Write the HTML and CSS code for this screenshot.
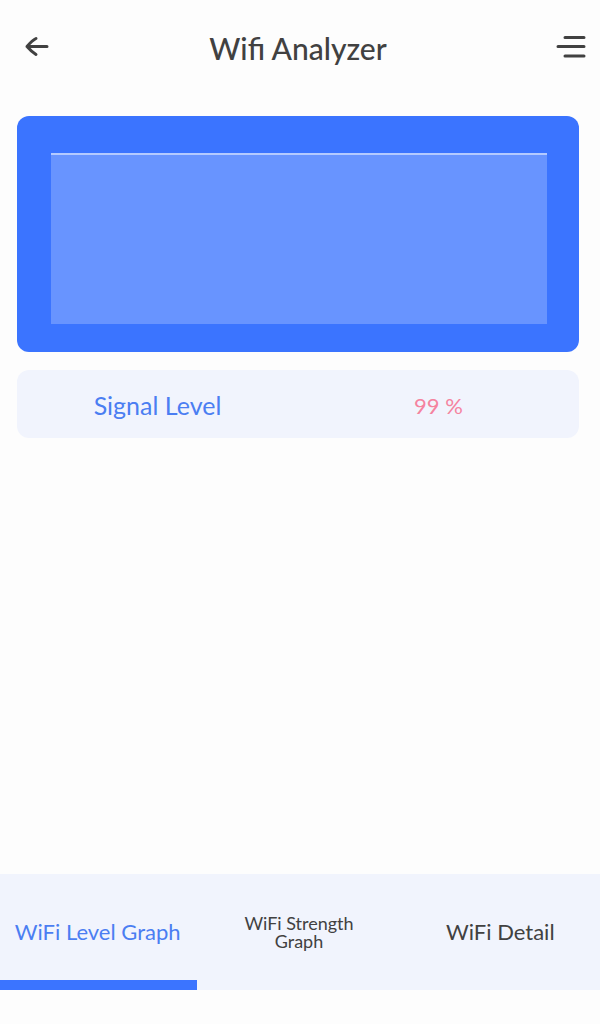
FILE: index.html
```html
<!DOCTYPE html>
<html lang="en">
<head>
  <meta charset="UTF-8">
  <meta name="viewport" content="width=device-width, initial-scale=1">
  <title>Wifi Analyzer</title>
  <link rel="stylesheet" href="styles.css">
</head>
<body>
  <header class="topbar">
    <button class="icon-btn" type="button" aria-label="Back">
      <svg width="26" height="24" viewBox="0 0 26 24">
        <path d="M23 11.5H3M12 3.5C9 5 6 8 3 11.5C6 15 9 17.5 12 19.5" />
      </svg>
    </button>
    <h1>Wifi Analyzer</h1>
    <button class="icon-btn menu" type="button" aria-label="Menu">
      <svg width="32" height="24" viewBox="0 0 32 24">
        <path d="M11 2.5H30M4 11.5H30M11 21H30" />
      </svg>
    </button>
  </header>

  <main>
    <section class="chart-card" aria-label="Signal chart">
      <div class="chart"></div>
    </section>
    <section class="signal">
      <span class="signal-label">Signal Level</span>
      <span class="signal-value">99 %</span>
    </section>
  </main>

  <nav class="tabs">
    <button class="tab active" type="button">WiFi Level Graph</button>
    <button class="tab small" type="button">WiFi Strength<br>Graph</button>
    <button class="tab" type="button">WiFi Detail</button>
  </nav>
</body>
</html>
```
FILE: styles.css
```css
* { box-sizing: border-box; }

body {
  margin: 0;
  min-height: 100vh;
  padding-bottom: 34px;
  display: flex;
  flex-direction: column;
  background: #fdfdfd;
  color: #414141;
  font-family: Lato, sans-serif;
}

button {
  border: 0;
  padding: 0;
  background: none;
  color: inherit;
  font: inherit;
  cursor: pointer;
}

/* top bar */
.topbar {
  display: grid;
  grid-template-columns: 1fr auto 1fr;
  align-items: center;
  height: 94px;
  padding: 0 14px 0 24px;
}
.topbar h1 {
  margin: 0;
  padding: 2px 14px 0 0;
  font-size: 30px;
  line-height: 36px;
  font-weight: 500;
}
.icon-btn { display: flex; justify-self: start; }
.icon-btn.menu { justify-self: end; }
.icon-btn svg {
  fill: none;
  stroke: #414141;
  stroke-width: 3;
  stroke-linecap: round;
  stroke-linejoin: round;
}

main {
  flex: 1;
  padding: 22px 21px 22px 17px;
}

/* chart */
.chart-card {
  padding: 37px 32px 28px 34px;
  border-radius: 12px;
  background: #3b74ff;
}
.chart {
  height: 171px;
  border-top: 2px solid #b4caff;
  background: #6894ff;
}

.signal {
  display: grid;
  grid-template-columns: 1fr 1fr;
  align-items: center;
  height: 68px;
  margin-top: 18px;
  padding-top: 2px;
  border-radius: 12px;
  background: #f1f4fd;
  text-align: center;
}
.signal-label { font-size: 25px; color: #4b7ef2; }
.signal-value { font-size: 22px; color: #f5839f; }

/* bottom tabs */
.tabs {
  display: grid;
  grid-template-columns: repeat(3, 1fr);
  gap: 4px;
  height: 116px;
  background: #f1f4fd;
}
.tab {
  padding: 10px 2px 0 0;
  border-bottom: 10px solid transparent;
  font-size: 22px;
  line-height: 24px;
}
.tab.small { font-size: 18px; line-height: 18px; }
.tab.active { border-bottom-color: #3b74ff; color: #4b7ef2; }
```
